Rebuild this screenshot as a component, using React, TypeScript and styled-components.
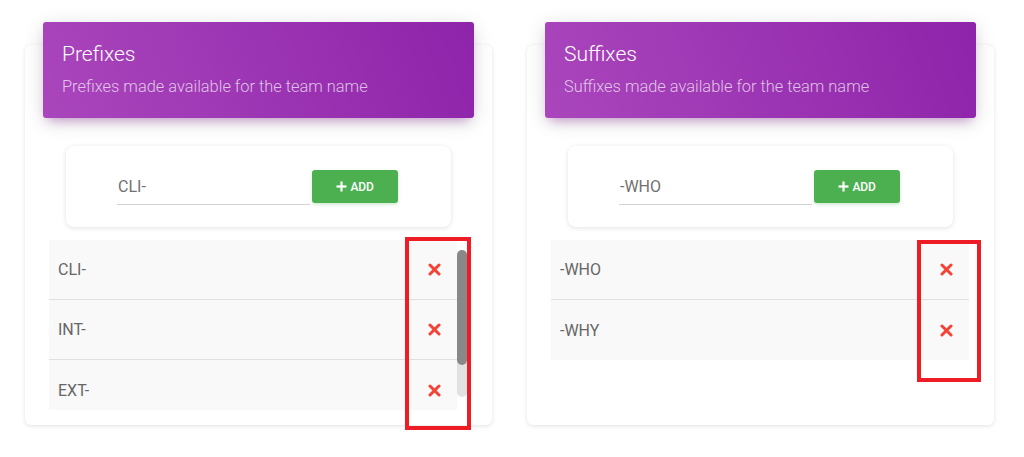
import styled, {createGlobalStyle} from "styled-components";

const GlobalStyle = createGlobalStyle`
    html, body {
        margin: 0;
        padding: 0;
        background: #ffffff;
        font-family: Roboto, "Liberation Sans", sans-serif;
    }
`

type Highlight = { left: number, top: number, width: number, height: number }

interface IAffixPanel {
    title: string;
    category: string;
    inputValue: string;
    items: string[];
    scroll: boolean;
    highlight: Highlight;
}

const PANELS: IAffixPanel[] = [
    {
        title: "Prefixes",
        category: "Prefixes made available for the team name",
        inputValue: "CLI-",
        items: ["CLI-", "INT-", "EXT-"],
        scroll: true,
        highlight: {left: 380, top: 192, width: 66, height: 193},
    },
    {
        title: "Suffixes",
        category: "Suffixes made available for the team name",
        inputValue: "-WHO",
        items: ["-WHO", "-WHY"],
        scroll: false,
        highlight: {left: 390, top: 195, width: 64, height: 142},
    },
]

const RemoveIcon = () => (
    <svg width="13" height="13" viewBox="0 0 13 13">
        <line x1="2" y1="2" x2="11" y2="11" stroke="#f44336" strokeWidth="3" strokeLinecap="round"/>
        <line x1="11" y1="2" x2="2" y2="11" stroke="#f44336" strokeWidth="3" strokeLinecap="round"/>
    </svg>
)

const PlusIcon = () => (
    <svg width="11" height="11" viewBox="0 0 11 11">
        <line x1="5.5" y1="0.5" x2="5.5" y2="10.5" stroke="#ffffff" strokeWidth="2.2"/>
        <line x1="0.5" y1="5.5" x2="10.5" y2="5.5" stroke="#ffffff" strokeWidth="2.2"/>
    </svg>
)

const AffixPanel = (props: { panel: IAffixPanel }) => {
    const {panel} = props;
    const {highlight} = panel;
    return (
        <StyledCard>
            <StyledCardHeader>
                <StyledCardTitle>{panel.title}</StyledCardTitle>
                <StyledCardCategory>{panel.category}</StyledCardCategory>
            </StyledCardHeader>

            <StyledAddArea>
                <StyledInput defaultValue={panel.inputValue}/>
                <StyledAddBtn><PlusIcon/>ADD</StyledAddBtn>
            </StyledAddArea>

            <StyledListArea $scroll={panel.scroll}>
                <StyledList>
                    {panel.items.map((item) => (
                        <StyledListRow key={item}>
                            <StyledListLabel>{item}</StyledListLabel>
                            <StyledRemoveBtn><RemoveIcon/></StyledRemoveBtn>
                        </StyledListRow>
                    ))}
                </StyledList>
                {panel.scroll && (
                    <StyledScrollTrack>
                        <StyledScrollThumb/>
                    </StyledScrollTrack>
                )}
            </StyledListArea>

            {/* red annotation box drawn over the delete column */}
            <StyledHighlight style={{
                left: highlight.left,
                top: highlight.top,
                width: highlight.width,
                height: highlight.height
            }}/>
        </StyledCard>
    )
}

const App = () => {
    return (
        <>
            <GlobalStyle/>
            <StyledPage>
                {PANELS.map((panel) => <AffixPanel key={panel.title} panel={panel}/>)}
            </StyledPage>
        </>
    )
}

export default App

const StyledPage = styled.div`
    display: flex;
    align-items: flex-start;
    gap: 35px;
    min-height: 457px;
    box-sizing: border-box;
    padding: 45px 0 0 25px;
`

const StyledCard = styled.div`
    position: relative;
    display: flex;
    flex-direction: column;
    width: 467px;
    height: 380px;
    box-sizing: border-box;
    background: #ffffff;
    border-radius: 6px;
    box-shadow: 0 1px 4px 0 rgba(0, 0, 0, 0.12);
`

const StyledCardHeader = styled.div`
    margin: -23px 18px 0;
    height: 96px;
    flex-shrink: 0;
    box-sizing: border-box;
    padding: 19px 19px 0;
    border-radius: 3px;
    background: linear-gradient(70deg, #aa46bc, #8e24aa);
    box-shadow: 0 4px 20px 0 rgba(0, 0, 0, 0.14), 0 7px 10px -5px rgba(156, 39, 176, 0.4);
    color: #ffffff;
`

const StyledCardTitle = styled.div`
    font-size: 21px;
    font-weight: 300;
    line-height: 27px;
`

const StyledCardCategory = styled.div`
    margin-top: 9px;
    font-size: 16.4px;
    font-weight: 300;
    line-height: 20px;
    color: rgba(255, 255, 255, 0.7);
`

const StyledAddArea = styled.div`
    display: flex;
    align-items: flex-end;
    flex-shrink: 0;
    margin: 28px 41px 0;
    height: 81px;
    box-sizing: border-box;
    padding: 0 53px 22px 51px;
    background: #ffffff;
    border-radius: 8px;
    box-shadow: 0 1px 5px 0 rgba(0, 0, 0, 0.12);
`

const StyledInput = styled.input`
    width: 193px;
    height: 36px;
    box-sizing: border-box;
    padding: 0 0 0 1px;
    border: none;
    border-bottom: 1px solid #d2d2d2;
    outline: none;
    background: transparent;
    font-family: Roboto, "Liberation Sans", sans-serif;
    font-size: 16px;
    color: #707070;
`

const StyledAddBtn = styled.button`
    display: flex;
    align-items: center;
    justify-content: center;
    gap: 3px;
    width: 86px;
    height: 33px;
    margin: 0 0 2px 2px;
    padding: 0;
    border: none;
    border-radius: 3px;
    background: #4caf50;
    box-shadow: 0 2px 2px 0 rgba(76, 175, 80, 0.14), 0 1px 5px 0 rgba(76, 175, 80, 0.12);
    color: #ffffff;
    font-family: Roboto, "Liberation Sans", sans-serif;
    font-size: 12px;
    font-weight: 500;
    letter-spacing: -0.2px;
`

const StyledListArea = styled.div<{ $scroll: boolean }>`
    display: flex;
    align-items: flex-start;
    margin: 13px 25px 0 24px;
    height: ${(props) => props.$scroll ? "170px" : "auto"};
    overflow: hidden;
`

const StyledList = styled.div`
    flex: 1;
    display: flex;
    flex-direction: column;
`

const StyledListRow = styled.div`
    display: flex;
    align-items: center;
    justify-content: space-between;
    flex-shrink: 0;
    height: 60px;
    box-sizing: border-box;
    padding: 0 16px 0 9px;
    background: #f9f9f9;
    border-bottom: 1px solid #e0e0e0;

    &:last-child {
        border-bottom: none;
    }
`

const StyledListLabel = styled.div`
    font-size: 16px;
    color: #666666;
`

const StyledRemoveBtn = styled.div`
    display: flex;
    align-items: center;
    justify-content: center;
    width: 13px;
    height: 13px;
`

const StyledScrollTrack = styled.div`
    display: flex;
    flex-direction: column;
    width: 10px;
    height: 147px;
    margin-top: 10px;
    background: #e2e2e2;
    border-radius: 5px;
`

const StyledScrollThumb = styled.div`
    height: 115px;
    background: #888888;
    border-radius: 5px;
`

const StyledHighlight = styled.div`
    position: absolute;
    box-sizing: border-box;
    border: 4px solid #ee1c25;
    pointer-events: none;
`
